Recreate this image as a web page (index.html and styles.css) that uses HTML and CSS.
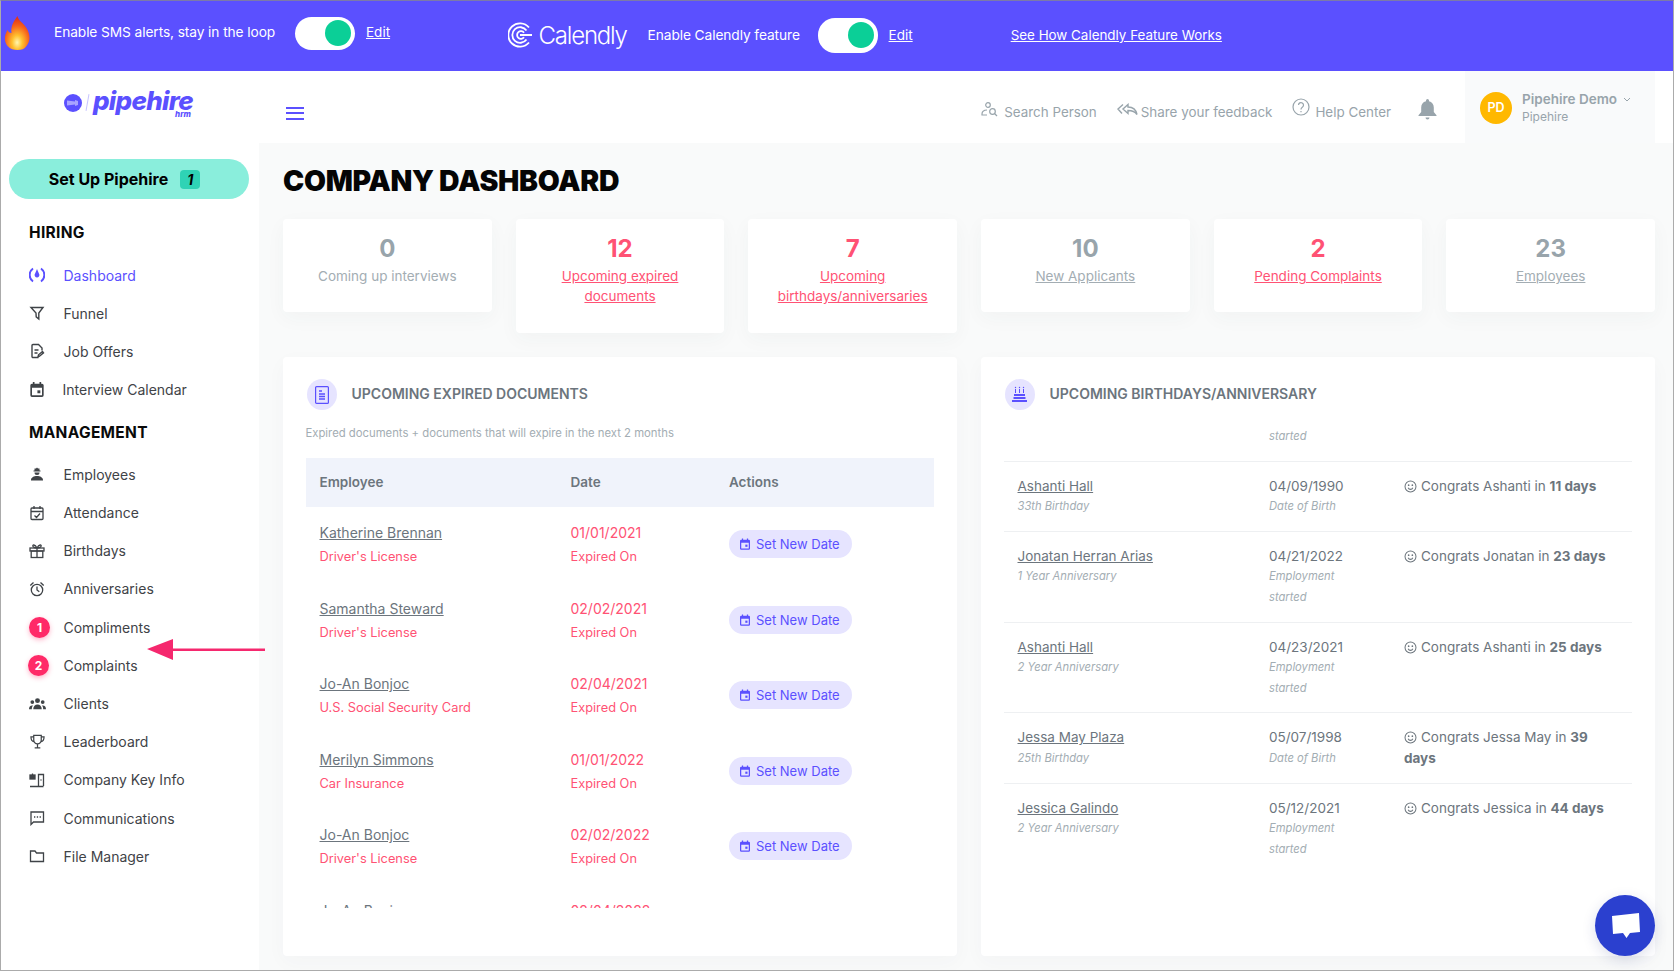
FILE: index.html
```html
<!DOCTYPE html>
<html lang="en">
<head>
<meta charset="utf-8">
<title>Company Dashboard</title>
<link rel="stylesheet" href="styles.css">
</head>
<body>
<svg class="sprite" width="0" height="0" aria-hidden="true">
  <symbol id="i-event" viewBox="0 0 16 18"><path fill="currentColor" d="M3 0h2v2h6V0h2v2h1a2 2 0 0 1 2 2v12a2 2 0 0 1-2 2H2a2 2 0 0 1-2-2V4a2 2 0 0 1 2-2h1zM2 7v9h12V7z"/><rect fill="currentColor" x="8.5" y="10" width="3.5" height="3.5"/></symbol>
  <symbol id="i-smile" viewBox="0 0 14 14"><circle cx="7" cy="7" r="5.9" fill="none" stroke="currentColor" stroke-width="1.1"/><circle cx="5" cy="5.6" r=".9" fill="currentColor"/><circle cx="9" cy="5.6" r=".9" fill="currentColor"/><path d="M4.4 8.4c.6 1.2 1.5 1.7 2.6 1.7s2-.5 2.6-1.7" fill="none" stroke="currentColor" stroke-width="1.1"/></symbol>
</svg>
<div class="frame">
  <div class="topbar">
    <div class="tb-group">
      <svg class="flame" viewBox="0 0 26 34"><defs><radialGradient id="fl" cx=".5" cy=".78" r=".7"><stop offset="0" stop-color="#fff6b0"/><stop offset=".3" stop-color="#ffc02e"/><stop offset=".7" stop-color="#f7631c"/><stop offset="1" stop-color="#e2371a"/></radialGradient></defs><path fill="url(#fl)" d="M13 0c1 5 6 7 9 12 4 7 4 13 0 18-2 3-5 4-9 4s-7-1-10-4c-4-5-3-11 0-16 1 2 2 3 4 3C6 11 9 5 13 0z"/></svg>
      <span class="tb-text tb-sms">Enable SMS alerts, stay in the loop</span>
      <span class="toggle"><span class="knob"></span></span>
      <a class="tb-link tb-edit tb-edit-up">Edit</a>
    </div>
    <div class="tb-group tb-cal">
      <svg class="cal-mark" viewBox="0 0 26 26" fill="none" stroke="#fff" stroke-width="1.8"><path d="M21 5.5A11.7 11.7 0 1 0 21 20.500"/><path d="M18.500 8.500a7.800 7.800 0 1 0 0 9"/><path d="M16 10.800a3.800 3.800 0 1 0 0 4.400M12 13h12"/></svg>
      <span class="cal-word">Calendly</span>
      <span class="tb-text tb-calt">Enable Calendly feature</span>
      <span class="toggle toggle-lg"><span class="knob"></span></span>
      <a class="tb-link tb-edit">Edit</a>
      <a class="tb-link tb-how">See How Calendly Feature Works</a>
    </div>
  </div>

  <div class="body">
    <aside class="sidebar">
      <div class="logo">
        <svg class="logo-mark" viewBox="0 0 18 18"><circle cx="9" cy="9" r="9" fill="#5b50ff"/><path d="M3 6.500l8 1V6l3 1v4l-3 1v-1.500l-8 1z" fill="#a9a4ff"/></svg>
        <span class="logo-slash"></span>
        <span class="logo-word">pipehire<small class="logo-hrm">hrm</small></span>
      </div>
      <button class="setup">Set Up Pipehire <span class="setup-n">1</span></button>

      <h3 class="nav-title">HIRING</h3>
      <a class="nav-item active"><svg class="nav-ico" viewBox="0 0 16 16" fill="none" stroke="currentColor" stroke-width="1.9"><path d="M4 1.500a8 8 0 0 0 0 13M12 1.500a8 8 0 0 1 0 13"/><path fill="currentColor" stroke="none" d="M8 2l2.300 5.500a2.400 2.400 0 1 1-4.600 0z"/></svg>Dashboard</a>
      <a class="nav-item"><svg class="nav-ico" viewBox="0 0 16 16" fill="none" stroke="currentColor" stroke-width="1.4"><path d="M2 2.500h12L9.800 8v6L7.200 11.800 7 8z"/></svg>Funnel</a>
      <a class="nav-item"><svg class="nav-ico" viewBox="0 0 16 16" fill="none" stroke="currentColor" stroke-width="1.4"><path d="M9.500 14.500H4a1 1 0 0 1-1-1v-11a1 1 0 0 1 1-1h5.500l3.500 3.500v2.500"/><path d="M5.500 7h4M5.500 10h3M9 13.800l.5-2 4-3.300 1 1.300-4 3.400z"/></svg>Job Offers</a>
      <a class="nav-item"><svg class="nav-ico nav-ico-sm"><use href="#i-event"/></svg>Interview Calendar</a>

      <h3 class="nav-title nav-title-2">MANAGEMENT</h3>
      <a class="nav-item"><svg class="nav-ico" viewBox="0 0 16 16" fill="currentColor"><path d="M8 1.500l1 1h1.500v2h1v1h-7v-1h1v-2H7zM5.500 6.500h5a2.500 2.500 0 0 1-5 0zM2 14c0-2.500 3-4 6-4s6 1.500 6 4v.5H2z"/></svg>Employees</a>
      <a class="nav-item"><svg class="nav-ico" viewBox="0 0 16 16" fill="none" stroke="currentColor" stroke-width="1.3"><rect x="2" y="3" width="12" height="11.500" rx="1"/><path d="M2 6.500h12M5 1v3M11 1v3M5.500 10.500l2 2 3.500-4"/></svg>Attendance</a>
      <a class="nav-item"><svg class="nav-ico" viewBox="0 0 16 16" fill="none" stroke="currentColor" stroke-width="1.3"><rect x="1" y="5" width="14" height="3"/><rect x="2.200" y="8" width="11.600" height="6.500"/><path d="M8 5v9.500M8 5C6 1 3 1.500 4 3.500 4.500 4.500 6 5 8 5c2 0 3.500-.5 4-1.500C13 1.500 10 1 8 5z"/></svg>Birthdays</a>
      <a class="nav-item"><svg class="nav-ico" viewBox="0 0 16 16" fill="none" stroke="currentColor" stroke-width="1.3"><circle cx="8" cy="9" r="5.700"/><path d="M8 5.500V9l2.300 1.800M1.300 4.500L4.500 1.500M14.700 4.500L11.500 1.500"/></svg>Anniversaries</a>
      <a class="nav-item"><span class="nav-badge">1</span>Compliments</a>
      <a class="nav-item"><span class="nav-badge nav-badge-2">2</span>Complaints</a>
      <a class="nav-item"><svg class="nav-ico nav-ico-wide" viewBox="0 0 18 12" fill="currentColor"><circle cx="9" cy="3" r="2.600"/><circle cx="3.500" cy="4.500" r="2"/><circle cx="14.500" cy="4.500" r="2"/><path d="M4.500 12c0-3 2-5 4.500-5s4.500 2 4.500 5zM0 12c0-2.500 1-4 3.500-4 .5 0 .8 0 .8.200C3.400 9 3 10.500 3 12zM18 12c0-2.500-1-4-3.500-4-.5 0-.8 0-.8.200.9.800 1.300 2.300 1.300 3.800z"/></svg>Clients</a>
      <a class="nav-item"><svg class="nav-ico nav-ico-wide" viewBox="0 0 16 16" fill="none" stroke="currentColor" stroke-width="1.3"><path d="M4 1.500h8v5a4 4 0 0 1-8 0zM4 3H1c0 3 1 5 3.500 5.500M12 3h3c0 3-1 5-3.500 5.500M8 10.500v4M5 14.800h6"/></svg>Leaderboard</a>
      <a class="nav-item"><svg class="nav-ico" viewBox="0 0 16 16" fill="none" stroke="currentColor" stroke-width="1.3"><rect x="1" y="3" width="5" height="4" fill="currentColor"/><path d="M3.500 3V1.500M9.500 14V2.500h5V14M1 14.500h13.500M11.500 8h1"/></svg>Company Key Info</a>
      <a class="nav-item"><svg class="nav-ico" viewBox="0 0 16 16" fill="none" stroke="currentColor" stroke-width="1.3"><path d="M2 2h12.500v10H4.500L2 14.500z"/><path stroke-dasharray="1.300 1.500" d="M5 7h7"/></svg>Communications</a>
      <a class="nav-item"><svg class="nav-ico" viewBox="0 0 16 16" fill="none" stroke="currentColor" stroke-width="1.3"><path d="M1.500 3h4.500l1.500 2h7v8.500h-13z"/></svg>File Manager</a>
    </aside>

    <div class="main-col">
      <header class="header">
        <button class="burger"><span></span><span></span><span></span></button>
        <div class="tools">
          <a class="tool tool-search"><svg class="tool-ico" viewBox="0 0 17 15" fill="none" stroke="currentColor" stroke-width="1.200"><circle cx="7" cy="3" r="2.300"/><path d="M6 8c-3 0-5 1.500-5 4v1h5"/><circle cx="11.500" cy="9.500" r="2.800"/><path d="M13.500 11.500L16 14"/></svg>Search Person</a>
          <a class="tool tool-share"><svg class="tool-ico tool-ico-share" viewBox="0 0 21 12" fill="none" stroke="currentColor" stroke-width="1.400"><path d="M6 1L1 5.500 5 10M11 1L6 5.500l5 4.500V7c4 0 7 1 9 4-1-5-4-7.500-9-7.500z"/></svg>Share your feedback</a>
          <a class="tool tool-help"><svg class="tool-ico tool-ico-help" viewBox="0 0 18 18" fill="none" stroke="currentColor" stroke-width="1.200"><circle cx="9" cy="9" r="8"/><path d="M6.500 7a2.500 2.500 0 1 1 3.800 2.200C9.300 9.800 9 10.300 9 11.500M9 13v1.200"/></svg>Help Center</a>
          <svg class="bell" viewBox="0 0 19 21" fill="currentColor"><path d="M9.500 0a1.500 1.500 0 0 1 1.500 1.500v.8c3 .7 4.800 3.200 4.800 6.200v4.500l2.700 3.200V17H.5v-.8l2.700-3.200V8.500c0-3 1.800-5.500 4.800-6.200v-.8A1.500 1.500 0 0 1 9.500 0zM7.500 18.500h4a2 2 0 0 1-4 0z"/></svg>
        </div>
        <div class="user">
          <span class="avatar">PD</span>
          <div class="user-txt">
            <div class="user-name">Pipehire Demo <svg class="chev" viewBox="0 0 8 5" fill="none" stroke="currentColor"><path d="M1 1l3 3 3-3"/></svg></div>
            <div class="user-co">Pipehire</div>
          </div>
        </div>
      </header>

      <main class="main">
        <h1 class="page-title">COMPANY DASHBOARD</h1>
        <section class="stats">
          <div class="stat"><b class="stat-n">0</b><span class="stat-l">Coming up interviews</span></div>
          <div class="stat stat-red"><b class="stat-n">12</b><a class="stat-l">Upcoming expired documents</a></div>
          <div class="stat stat-red"><b class="stat-n">7</b><a class="stat-l">Upcoming birthdays/anniversaries</a></div>
          <div class="stat"><b class="stat-n">10</b><a class="stat-l">New Applicants</a></div>
          <div class="stat stat-red"><b class="stat-n">2</b><a class="stat-l">Pending Complaints</a></div>
          <div class="stat"><b class="stat-n">23</b><a class="stat-l">Employees</a></div>
        </section>

        <section class="panels">
          <div class="panel">
            <div class="panel-head">
              <span class="panel-ico"><svg viewBox="0 0 14 18" width="14" height="18" fill="none" stroke="#5b50ff" stroke-width="1.200"><rect x=".6" y=".6" width="12.800" height="16.800" rx="1"/><path d="M4 5h3M4 8h6M4 10.500h6M4 13h6" stroke-width="1.300"/></svg></span>
              <h2 class="panel-title">UPCOMING EXPIRED DOCUMENTS</h2>
            </div>
            <p class="panel-sub">Expired documents + documents that will expire in the next 2 months</p>
            <div class="t-head"><span>Employee</span><span>Date</span><span>Actions</span></div>
            <div class="t-body">
              <div class="t-row"><div><a class="t-name">Katherine Brennan</a><div class="t-red">Driver's License</div></div><div><div class="t-date">01/01/2021</div><div class="t-red">Expired On</div></div><a class="pill"><svg class="pill-ico"><use href="#i-event"/></svg>Set New Date</a></div>
              <div class="t-row"><div><a class="t-name">Samantha Steward</a><div class="t-red">Driver's License</div></div><div><div class="t-date">02/02/2021</div><div class="t-red">Expired On</div></div><a class="pill"><svg class="pill-ico"><use href="#i-event"/></svg>Set New Date</a></div>
              <div class="t-row"><div><a class="t-name">Jo-An Bonjoc</a><div class="t-red">U.S. Social Security Card</div></div><div><div class="t-date">02/04/2021</div><div class="t-red">Expired On</div></div><a class="pill"><svg class="pill-ico"><use href="#i-event"/></svg>Set New Date</a></div>
              <div class="t-row"><div><a class="t-name">Merilyn Simmons</a><div class="t-red">Car Insurance</div></div><div><div class="t-date">01/01/2022</div><div class="t-red">Expired On</div></div><a class="pill"><svg class="pill-ico"><use href="#i-event"/></svg>Set New Date</a></div>
              <div class="t-row"><div><a class="t-name">Jo-An Bonjoc</a><div class="t-red">Driver's License</div></div><div><div class="t-date">02/02/2022</div><div class="t-red">Expired On</div></div><a class="pill"><svg class="pill-ico"><use href="#i-event"/></svg>Set New Date</a></div>
              <div class="t-row"><div><a class="t-name">Jo-An Bonjoc</a><div class="t-red">Driver's License</div></div><div><div class="t-date">02/04/2022</div><div class="t-red">Expired On</div></div><a class="pill"><svg class="pill-ico"><use href="#i-event"/></svg>Set New Date</a></div>
            </div>
          </div>

          <div class="panel">
            <div class="panel-head">
              <span class="panel-ico"><svg viewBox="0 0 17 18" width="17" height="18" fill="#5b50ff"><path d="M3 8h11v2H3zM2.500 11h12v2h-12zM1 14h15v2H1zM4 3h1v4H4zM8 3h1v4H8zM12 3h1v4h-1z"/><circle cx="4.500" cy="1.500" r=".7"/><circle cx="8.500" cy="1.500" r=".7"/><circle cx="12.500" cy="1.500" r=".7"/></svg></span>
              <h2 class="panel-title">UPCOMING BIRTHDAYS/ANNIVERSARY</h2>
            </div>
            <div class="b-list">
              <div class="b-row b-row-cut"><div><a class="b-name">Jessica Galindo</a><div class="b-sub">2 Year Anniversary</div></div><div><div class="b-date">03/30/2021</div><div class="b-sub">Employment</div><div class="b-sub">started</div></div><div class="b-msg"></div></div>
              <div class="b-row"><div><a class="b-name">Ashanti Hall</a><div class="b-sub">33th Birthday</div></div><div><div class="b-date">04/09/1990</div><div class="b-sub">Date of Birth</div></div><div class="b-msg"><svg class="smile"><use href="#i-smile"/></svg>Congrats Ashanti in <b>11 days</b></div></div>
              <div class="b-row"><div><a class="b-name">Jonatan Herran Arias</a><div class="b-sub">1 Year Anniversary</div></div><div><div class="b-date">04/21/2022</div><div class="b-sub">Employment</div><div class="b-sub">started</div></div><div class="b-msg"><svg class="smile"><use href="#i-smile"/></svg>Congrats Jonatan in <b>23 days</b></div></div>
              <div class="b-row"><div><a class="b-name">Ashanti Hall</a><div class="b-sub">2 Year Anniversary</div></div><div><div class="b-date">04/23/2021</div><div class="b-sub">Employment</div><div class="b-sub">started</div></div><div class="b-msg"><svg class="smile"><use href="#i-smile"/></svg>Congrats Ashanti in <b>25 days</b></div></div>
              <div class="b-row"><div><a class="b-name">Jessa May Plaza</a><div class="b-sub">25th Birthday</div></div><div><div class="b-date">05/07/1998</div><div class="b-sub">Date of Birth</div></div><div class="b-msg"><svg class="smile"><use href="#i-smile"/></svg>Congrats Jessa May in <b>39 days</b></div></div>
              <div class="b-row b-row-last"><div><a class="b-name">Jessica Galindo</a><div class="b-sub">2 Year Anniversary</div></div><div><div class="b-date">05/12/2021</div><div class="b-sub">Employment</div><div class="b-sub">started</div></div><div class="b-msg"><svg class="smile"><use href="#i-smile"/></svg>Congrats Jessica in <b>44 days</b></div></div>
            </div>
          </div>
        </section>
      </main>
    </div>
  </div>

  <svg class="arrow" viewBox="0 0 118 22"><path d="M118 9.500H26V0L0 10l26 11v-9h92z" fill="#f5286e"/></svg>
  <button class="chat"><svg viewBox="0 0 29 26" width="29" height="26"><path fill="#fff" d="M1 3l27-3 1 19-10 1-3.500 5-3.500-5-10 1z"/></svg></button>
</div>
</body>
</html>
```

FILE: styles.css
```css
* { box-sizing: border-box; }
html, body { margin: 0; padding: 0; }
body { font-family: Inter, "Liberation Sans", sans-serif; font-size: 14px; color: #6c757d; background: #fff; }
.sprite { position: absolute; }
a { cursor: pointer; }
button { font-family: inherit; border: 0; padding: 0; cursor: pointer; }
h1, h2, h3, p { margin: 0; }

.frame { position: relative; width: 1674px; height: 971px; border: 1px solid #ababab; border-top-color: #7c7aa8; overflow: hidden; display: flex; flex-direction: column; }

/* top bar */
.topbar { flex: none; height: 70px; background: #5b50ff; display: flex; color: #fff; }
.tb-group { display: flex; align-items: center; height: 64px; }
.tb-cal { height: 68px; margin-left: 117.5px; }
.flame { width: 27px; height: 34px; margin-left: 3px; }
.tb-text { font-size: 13.75px; letter-spacing: -.1px; }
.tb-sms { margin: -2px 0 0 23px; width: 241px; }
.toggle { display: flex; align-items: center; justify-content: flex-end; width: 60px; height: 33px; padding-right: 4px; border-radius: 17px; background: #fff; }
.toggle-lg { height: 35px; }
.knob { width: 26px; height: 26px; border-radius: 50%; background: #0bcf97; }
.tb-link { color: #fff; text-decoration: underline; font-size: 13.5px; }
.tb-edit { margin-left: 11px; }
.tb-edit-up { margin-top: -2px; }
.cal-mark { width: 26px; height: 26px; }
.cal-word { margin-left: 5px; font-size: 24px; font-weight: 300; letter-spacing: -1.2px; width: 109px; }
.tb-calt { width: 170px; }
.tb-how { margin-left: 98px; font-size: 13.4px; }

.body { flex: 1; display: flex; min-height: 0; }

/* sidebar */
.sidebar { flex: none; width: 258px; background: #fff; padding-left: 28px; position: relative; z-index: 1; }
.logo { height: 88px; margin-left: -28px; padding: 17px 0 0 63px; display: flex; align-items: flex-start; }
.logo-mark { width: 18px; height: 18px; margin-top: 6px; }
.logo-slash { width: 1px; height: 17px; margin: 6px 0 0 5px; background: #c8c5ff; transform: rotate(10deg); }
.logo-word { position: relative; margin-left: 5px; font-size: 26px; line-height: 26px; font-weight: 800; font-style: italic; letter-spacing: -.7px; color: #5b50ff; }
.logo-hrm { position: absolute; right: 2px; top: 21px; font-size: 8px; line-height: 10px; letter-spacing: 0; }
.setup { display: flex; align-items: center; justify-content: center; width: 240px; height: 40px; margin-left: -20px; padding-right: 9px; border-radius: 20px; background: #8aeedc; color: #000; font-size: 16px; font-weight: 700; }
.setup-n { display: inline-block; width: 20px; height: 19px; margin-left: 12px; border-radius: 4px; background: #2fd3b5; font-size: 14px; line-height: 19px; font-style: italic; font-weight: 700; text-align: center; }
.nav-title { height: 20px; margin: 24px 0 13px; font-size: 15.5px; line-height: 20px; font-weight: 700; letter-spacing: .3px; color: #0a0a0a; }
.nav-title-2 { margin: 14px 0 12.5px; }
.nav-item { display: flex; align-items: center; height: 38.2px; color: #3f4347; font-size: 14px; }
.nav-item.active { color: #5b50ff; }
.nav-ico { flex: none; width: 16px; height: 16px; margin-right: 18.5px; }
.nav-ico-sm { width: 14px; height: 15px; margin-left: 1px; margin-right: 18.5px; }
.nav-ico-wide { width: 17px; height: 15px; margin-right: 17.5px; }
.nav-badge { flex: none; width: 21px; height: 21px; margin-right: 13.5px; border-radius: 50%; background: #ff2a68; color: #fff; font-size: 12px; font-weight: 700; line-height: 21px; text-align: center; box-shadow: 0 2px 5px rgba(255, 42, 104, .35); }
.nav-badge-2 { margin-left: -1px; margin-right: 14.5px; }

/* header */
.main-col { flex: 1; min-width: 0; display: flex; flex-direction: column; background: #f9fafa; }
.header { flex: none; height: 72px; background: #fff; display: flex; align-items: center; }
.burger { display: flex; flex-direction: column; gap: 3.5px; width: 18px; margin: 12px 0 0 27px; background: none; }
.burger span { height: 2px; background: #5b50ff; }
.tools { display: flex; align-items: center; margin-left: auto; color: #98a4ab; height: 100%; }
.tool { display: flex; align-items: center; font-size: 13.4px; margin-top: 10px; }
.tool-ico { width: 17px; height: 15px; margin-right: 6px; margin-top: -6px; }
.tool-ico-share { width: 21px; height: 13px; margin-right: 3px; }
.tool-ico-help { width: 18px; height: 18px; margin-right: 5px; margin-top: -10px; }
.tool-share { margin-left: 20px; }
.tool-help { margin-left: 20px; }
.bell { width: 19px; height: 21px; margin: 5px 28px 0 27px; }
.user { flex: none; display: flex; align-items: center; width: 190px; height: 100%; margin-right: 18px; padding: 1px 0 0 15px; background: #f9fafb; color: #98a4ab; }
.avatar { flex: none; width: 32px; height: 32px; border-radius: 50%; background: #ffb800; color: #fff; font-size: 12.5px; font-weight: 600; line-height: 32px; text-align: center; }
.user-txt { margin-left: 10px; }
.user-name { font-size: 13.5px; font-weight: 600; line-height: 17px; }
.chev { width: 8px; height: 5px; margin: 0 0 2px 3px; }
.user-co { font-size: 12px; line-height: 17px; }

/* main */
.main { flex: 1; min-height: 0; padding: 20px 18px 0 24px; }
.page-title { height: 36px; font-size: 28.4px; line-height: 36px; font-weight: 900; letter-spacing: -.3px; color: #050505; }
.stats { display: grid; grid-template-columns: repeat(6, 1fr); gap: 24px; align-items: start; height: 113px; margin-top: 20px; }
.stat { display: flex; flex-direction: column; align-items: center; padding: 16px 20px 26px; background: #fff; border-radius: 4px; box-shadow: 0 6px 20px rgba(60, 70, 80, .04); text-align: center; color: #98a4ab; }
.stat-n { font-size: 24px; line-height: 28px; font-weight: 700; color: #98a4ab; }
.stat-l { margin-top: 3px; font-size: 13.5px; line-height: 20.4px; color: #a3adb3; }
a.stat-l { text-decoration: underline; }
.stat-red .stat-n, .stat-red .stat-l { color: #ff5274; }

.panels { display: grid; grid-template-columns: 1fr 1fr; gap: 24px; height: 599px; margin-top: 25px; }
.panel { min-width: 0; padding: 22px 23px 0 22.5px; background: #fff; border-radius: 4px; box-shadow: 0 6px 20px rgba(60, 70, 80, .03); }
.panel-head { display: flex; align-items: center; height: 31px; margin-left: 1px; }
.panel-ico { flex: none; display: flex; align-items: center; justify-content: center; width: 30px; height: 31px; border-radius: 50%; background: #e6e4ff; }
.panel-title { margin: 0 0 1px 15px; font-size: 14px; line-height: 20px; font-weight: 600; color: #6c757d; }
.panel-sub { margin-top: 15px; font-size: 11.3px; line-height: 16px; color: #a3adb3; }
.t-head { display: grid; grid-template-columns: 251px 158.5px 1fr; align-items: center; height: 49px; margin-top: 17px; padding: 0 0 1px 14px; background: #f0f3fb; font-size: 13.5px; font-weight: 600; }
.t-body { height: 401px; overflow: hidden; }
.t-row { display: grid; grid-template-columns: 251px 158.5px 1fr; align-items: start; height: 75.5px; padding: 16px 0 0 14px; }
.t-name { text-decoration: underline; font-size: 14px; line-height: 20px; }
.t-date { font-size: 14px; line-height: 20px; color: #ff5274; }
.t-red { margin-top: 4px; font-size: 12.8px; line-height: 20px; color: #ff5274; }
.pill { justify-self: start; display: flex; align-items: center; height: 28px; margin-top: 7px; padding: 0 12px 0 11px; border-radius: 14px; background: #e6e4ff; color: #5b50ff; font-size: 13px; white-space: nowrap; }
.pill-ico { width: 10px; height: 12px; margin-right: 6px; }

.b-list { height: 534px; margin: 11.5px 0 0; overflow: hidden; }
.b-row { display: grid; grid-template-columns: 251.5px 135px 212px; padding: 14px 0 14.5px 14px; border-bottom: 1px solid #eef0f2; }
.b-row-cut { margin-top: -50.5px; }
.b-row-last { border-bottom: 0; }
.b-name { text-decoration: underline; font-size: 13.5px; line-height: 20.4px; }
.b-date { font-size: 13.5px; line-height: 20.4px; }
.b-sub { font-size: 11.2px; line-height: 20.4px; font-style: italic; color: #a3adb3; }
.b-msg { font-size: 13.5px; line-height: 20.4px; }
.b-msg b { font-weight: 700; }
.smile { width: 13px; height: 13px; margin-right: 4px; vertical-align: -2px; }

/* overlays */
.arrow { position: absolute; left: 146px; top: 638px; width: 118px; height: 22px; z-index: 3; }
.chat { position: absolute; left: 1594px; top: 894px; width: 60px; height: 61px; border-radius: 50%; background: #2b40cf; display: flex; align-items: center; justify-content: center; box-shadow: 0 4px 14px rgba(30, 40, 120, .15); z-index: 3; }
```
